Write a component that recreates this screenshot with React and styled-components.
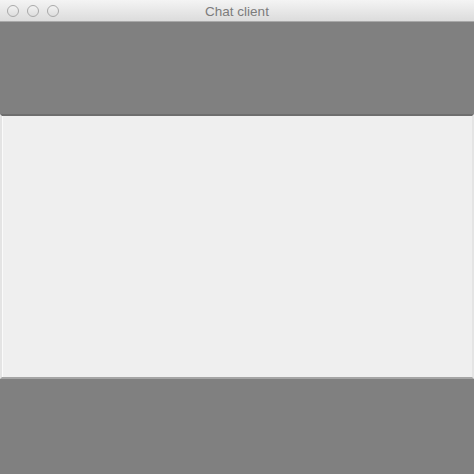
import React from "react";
import styled, { createGlobalStyle } from "styled-components";

const Global = createGlobalStyle`
  html, body { margin: 0; padding: 0; background: #808080; }
  body { font-family: "Liberation Sans", "DejaVu Sans", sans-serif; }
`;

const Window = styled.div`
  width: 474px;
  height: 474px;
  display: flex;
  flex-direction: column;
  background: #808080;
  overflow: hidden;
`;

const TitleBar = styled.div`
  height: 21px;
  flex: none;
  display: flex;
  align-items: center;
  position: relative;
  background: linear-gradient(#f4f4f4, #dcdcdc);
  border-bottom: 1px solid #a8a8a8;
`;

const Lights = styled.div`
  display: flex;
  gap: 8px;
  padding-left: 7px;
`;

const Light = styled.span`
  width: 10px;
  height: 10px;
  border-radius: 50%;
  border: 1px solid #a9a9a9;
  background: linear-gradient(#f2f2f2, #dedede);
`;

const Title = styled.div`
  position: absolute;
  left: 0;
  right: 0;
  top: 0;
  bottom: 0;
  display: flex;
  align-items: center;
  justify-content: center;
  font-family: "Liberation Sans", "DejaVu Sans", sans-serif;
  font-size: 13.5px;
  color: #7c7c7c;
  padding-top: 1px;
  pointer-events: none;
`;

const Panel = styled.div`
  flex: none;
  height: ${(p) => p.$h}px;
  background: #808080;
`;

const Content = styled.div`
  flex: none;
  height: 261px;
  background: #efefef;
  border-top: 2px solid #6e6e6e;
  border-bottom: 2px solid #a5a5a5;
  border-left: 2px solid #e4e4e4;
  border-right: 2px solid #e4e4e4;
  box-shadow: inset 1px 0 0 #fafafa;
`;

export default function App() {
  return (
    <>
      <Global />
      <Window>
        <TitleBar>
          <Lights>
            <Light />
            <Light />
            <Light />
          </Lights>
          <Title>Chat client</Title>
        </TitleBar>
        <Panel $h={92} />
        <Content />
        <Panel $h={95} />
      </Window>
    </>
  );
}
